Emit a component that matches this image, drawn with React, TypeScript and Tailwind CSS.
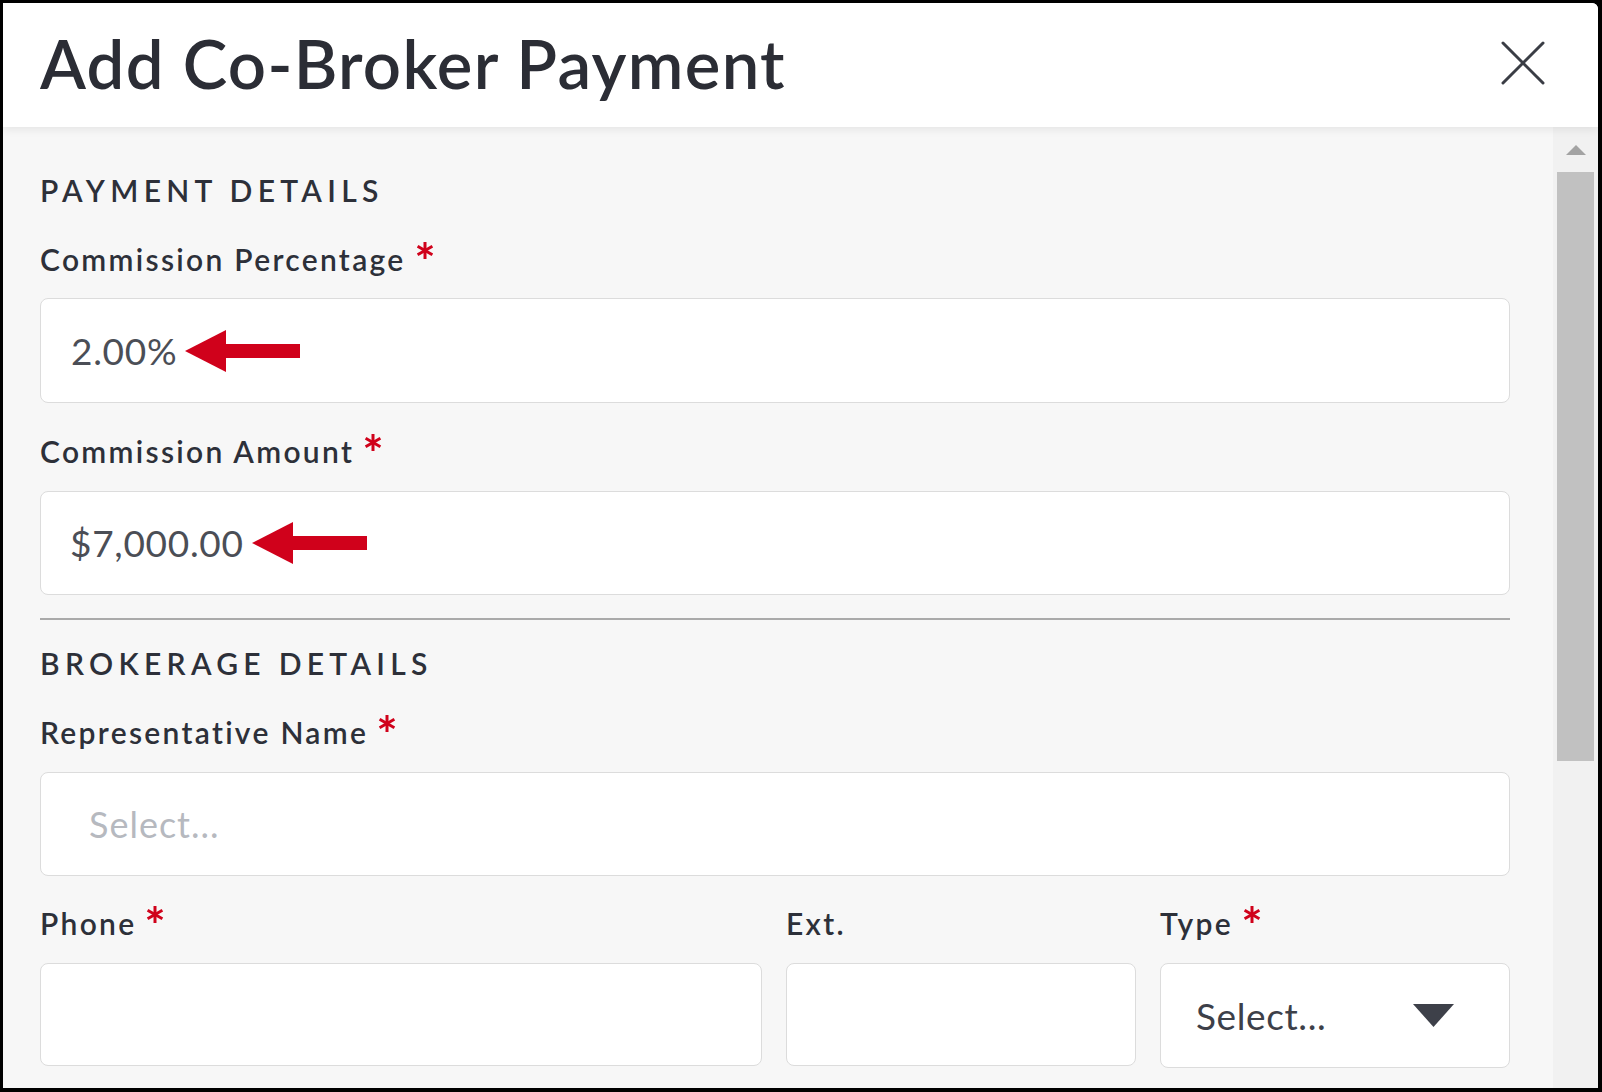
import React from "react";

const font = { fontFamily: "Lato, 'Noto Sans', sans-serif" };

function Star() {
  return (
    <svg width="20" height="17" viewBox="0 0 20 17" className="ml-[9px] mt-[-3px] shrink-0">
      <g stroke="#d0021b" strokeWidth="3" strokeLinecap="butt">
        <line x1="10" y1="0" x2="10" y2="17" />
        <line x1="2.6" y1="4.25" x2="17.4" y2="12.75" />
        <line x1="2.6" y1="12.75" x2="17.4" y2="4.25" />
      </g>
    </svg>
  );
}

function Label({ text, required = true }: { text: string; required?: boolean }) {
  return (
    <div className="flex items-start h-[29px] text-[30px] leading-[29px] font-semibold tracking-[2.3px] text-[#2d3039]">
      <span>{text}</span>
      {required && <Star />}
    </div>
  );
}

function Arrow() {
  return (
    <svg width="115" height="42" viewBox="0 0 115 42" className="ml-[8px] shrink-0">
      <polygon points="0,21 41,0 41,42" fill="#d0011b" />
      <rect x="40" y="14" width="75" height="14" fill="#d0011b" />
    </svg>
  );
}

function Heading({ text }: { text: string }) {
  return (
    <div className="h-[30px] text-[30px] leading-[30px] font-semibold tracking-[5.3px] text-[#2d3039]">
      {text}
    </div>
  );
}

export default function App() {
  return (
    <div
      className="w-[1602px] h-[1092px] bg-black pt-[3px] pl-[3px] pr-[4px] pb-[4px] overflow-hidden"
      style={font}
    >
      <div className="w-full h-full flex flex-col bg-[#f7f7f7] overflow-hidden rounded-tr-[6px]">
        {/* Header */}
        <div className="relative z-10 h-[124px] shrink-0 bg-white flex items-center justify-between pl-[37px] pr-[53px] shadow-[0_3px_8px_rgba(0,0,0,0.07)]">
          <div className="text-[67px] leading-[67px] font-semibold text-[#2b2d35] mt-[-4px] tracking-[1.3px]">
            Add Co-Broker Payment
          </div>
          <svg width="44" height="44" viewBox="0 0 44 44" className="mt-[-4px]">
            <g stroke="#3a3d45" strokeWidth="3" strokeLinecap="round">
              <line x1="2" y1="2" x2="42" y2="42" />
              <line x1="42" y1="2" x2="2" y2="42" />
            </g>
          </svg>
        </div>

        {/* Body */}
        <div className="flex-1 flex min-h-0">
          <div className="flex-1 min-w-0 pl-[37px] pr-[43px] pt-[48px] overflow-hidden">
            <Heading text="PAYMENT DETAILS" />
            <div className="mt-[40px]">
              <Label text="Commission Percentage" />
            </div>
            <div className="mt-[24px] h-[105px] bg-white border border-[#dcdcdc] rounded-[8px] flex items-center pl-[30px] text-[37px] tracking-[0.7px] text-[#4b4e56]">
              <span>2.00%</span>
              <Arrow />
            </div>
            <div className="mt-[34px]">
              <Label text="Commission Amount" />
            </div>
            <div className="mt-[25px] h-[104px] bg-white border border-[#dcdcdc] rounded-[8px] flex items-center pl-[29px] text-[37px] tracking-[0.7px] text-[#4b4e56]">
              <span>$7,000.00</span>
              <Arrow />
            </div>
            <div className="mt-[23px] h-[2px] bg-[#aaaaaa]" />
            <div className="mt-[28px]">
              <Heading text="BROKERAGE DETAILS" />
            </div>
            <div className="mt-[40px]">
              <Label text="Representative Name" />
            </div>
            <div className="mt-[25px] h-[104px] bg-white border border-[#dcdcdc] rounded-[8px] flex items-center pl-[48px] text-[36px] tracking-[1px] text-[#b6b9bf]">
              Select...
            </div>
            <div className="mt-[33px] flex gap-[24px]">
              <div className="w-[722px] shrink-0">
                <Label text="Phone" />
                <div className="mt-[25px] h-[103px] bg-white border border-[#dcdcdc] rounded-[8px]" />
              </div>
              <div className="w-[350px] shrink-0">
                <Label text="Ext." required={false} />
                <div className="mt-[25px] h-[103px] bg-white border border-[#dcdcdc] rounded-[8px]" />
              </div>
              <div className="flex-1 min-w-0">
                <Label text="Type" />
                <div className="mt-[25px] h-[105px] bg-white border border-[#dcdcdc] rounded-[8px] flex items-center justify-between pl-[35px] pr-[55px] text-[37px] tracking-[0.6px] text-[#3d4049]">
                  <span>Select...</span>
                  <svg width="41" height="23" viewBox="0 0 41 23">
                    <polygon points="0,0 41,0 20.5,23" fill="#3d4049" />
                  </svg>
                </div>
              </div>
            </div>
          </div>

          {/* Scrollbar */}
          <div className="w-[45px] shrink-0 bg-[#f1f1f1] flex flex-col items-center pt-[18px]">
            <svg width="20" height="10" viewBox="0 0 20 10">
              <polygon points="10,0 20,10 0,10" fill="#a3a3a3" />
            </svg>
            <div className="mt-[17px] w-[37px] h-[589px] bg-[#c1c1c1]" />
          </div>
        </div>
      </div>
    </div>
  );
}
